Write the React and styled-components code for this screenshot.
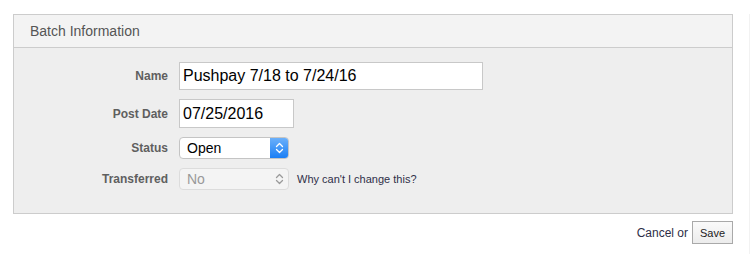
import React from "react";
import styled, { createGlobalStyle } from "styled-components";

const GlobalStyle = createGlobalStyle`
  html, body {
    margin: 0;
    padding: 0;
    background: #fff;
    font-family: "Liberation Sans", Arial, sans-serif;
  }
`;

const Page = styled.div`
  padding: 14px 18px 0 13px;
  width: 720px;
`;

const EdgeLine = styled.div`
  position: fixed;
  top: 14px;
  bottom: 0;
  left: 749px;
  width: 1px;
  background: #f2f2f2;
`;

const Panel = styled.section`
  border: 1px solid #cccccc;
  background: #eeeeee;
`;

const PanelHeader = styled.header`
  height: 32px;
  display: flex;
  align-items: center;
  padding-left: 16px;
  background: #f3f3f3;
  border-bottom: 1px solid #cccccc;
  color: #555;
  font-size: 14px;
`;

const Form = styled.div`
  display: grid;
  grid-template-columns: 154px 1fr;
  column-gap: 11px;
  row-gap: 9px;
  align-items: center;
  padding: 14px 0 23px;
`;

const Label = styled.label`
  text-align: right;
  font-size: 12px;
  font-weight: bold;
  color: #5f5f5f;
`;

const Field = styled.div`
  display: flex;
  align-items: center;
  gap: 8px;
`;

const TextInput = styled.div`
  box-sizing: border-box;
  width: ${(p) => p.$width}px;
  height: ${(p) => p.$height}px;
  padding: 0 3px;
  display: flex;
  align-items: center;
  background: #fff;
  border: 1px solid #c8c8c8;
  font-size: 16px;
  color: #000;
`;

const Select = styled.div`
  box-sizing: border-box;
  width: 110px;
  height: 22px;
  display: flex;
  align-items: stretch;
  border-radius: 4px;
  border: 1px solid ${(p) => (p.$disabled ? "#dcdcdc" : "#c4c4c4")};
  background: ${(p) => (p.$disabled ? "#f4f4f4" : "#fff")};
  overflow: hidden;
`;

const SelectText = styled.span`
  flex: 1;
  display: flex;
  align-items: center;
  padding-left: 7px;
  font-size: 14px;
  color: ${(p) => (p.$disabled ? "#999" : "#000")};
`;

const Stepper = styled.span`
  width: 18px;
  display: flex;
  align-items: center;
  justify-content: center;
  background: ${(p) =>
    p.$disabled ? "transparent" : "linear-gradient(#6bb0fa, #1b7ff5)"};
`;

const Help = styled.span`
  font-size: 11px;
  color: #2e2e48;
`;

const Footer = styled.div`
  display: flex;
  justify-content: flex-end;
  align-items: center;
  gap: 4px;
  margin-top: 7px;
  font-size: 12px;
  color: #2e2e48;
`;

const SaveButton = styled.button`
  box-sizing: border-box;
  width: 41px;
  height: 23px;
  padding: 0;
  border: 1px solid #a9a9a9;
  background: linear-gradient(#fafafa, #ececec);
  font-family: "Liberation Sans", Arial, sans-serif;
  font-size: 11px;
  color: #222;
`;

const Chevrons = ({ color }) => (
  <svg width="9" height="14" viewBox="0 0 9 14">
    <path
      d="M1.5 5.5 L4.5 2.5 L7.5 5.5 M1.5 8.5 L4.5 11.5 L7.5 8.5"
      fill="none"
      stroke={color}
      strokeWidth="1.3"
      strokeLinecap="round"
      strokeLinejoin="round"
    />
  </svg>
);

const FakeSelect = ({ value, disabled }) => (
  <Select $disabled={disabled}>
    <SelectText $disabled={disabled}>{value}</SelectText>
    <Stepper $disabled={disabled}>
      <Chevrons color={disabled ? "#9a9a9a" : "#fff"} />
    </Stepper>
  </Select>
);

export default function App() {
  return (
    <>
      <GlobalStyle />
      <EdgeLine />
      <Page>
        <Panel>
          <PanelHeader>Batch Information</PanelHeader>
          <Form>
            <Label>Name</Label>
            <Field>
              <TextInput $width={304} $height={28}>
                Pushpay 7/18 to 7/24/16
              </TextInput>
            </Field>
            <Label>Post Date</Label>
            <Field>
              <TextInput $width={115} $height={29}>
                07/25/2016
              </TextInput>
            </Field>
            <Label>Status</Label>
            <Field>
              <FakeSelect value="Open" />
            </Field>
            <Label>Transferred</Label>
            <Field>
              <FakeSelect value="No" disabled />
              <Help>Why can't I change this?</Help>
            </Field>
          </Form>
        </Panel>
        <Footer>
          Cancel or <SaveButton>Save</SaveButton>
        </Footer>
      </Page>
    </>
  );
}
